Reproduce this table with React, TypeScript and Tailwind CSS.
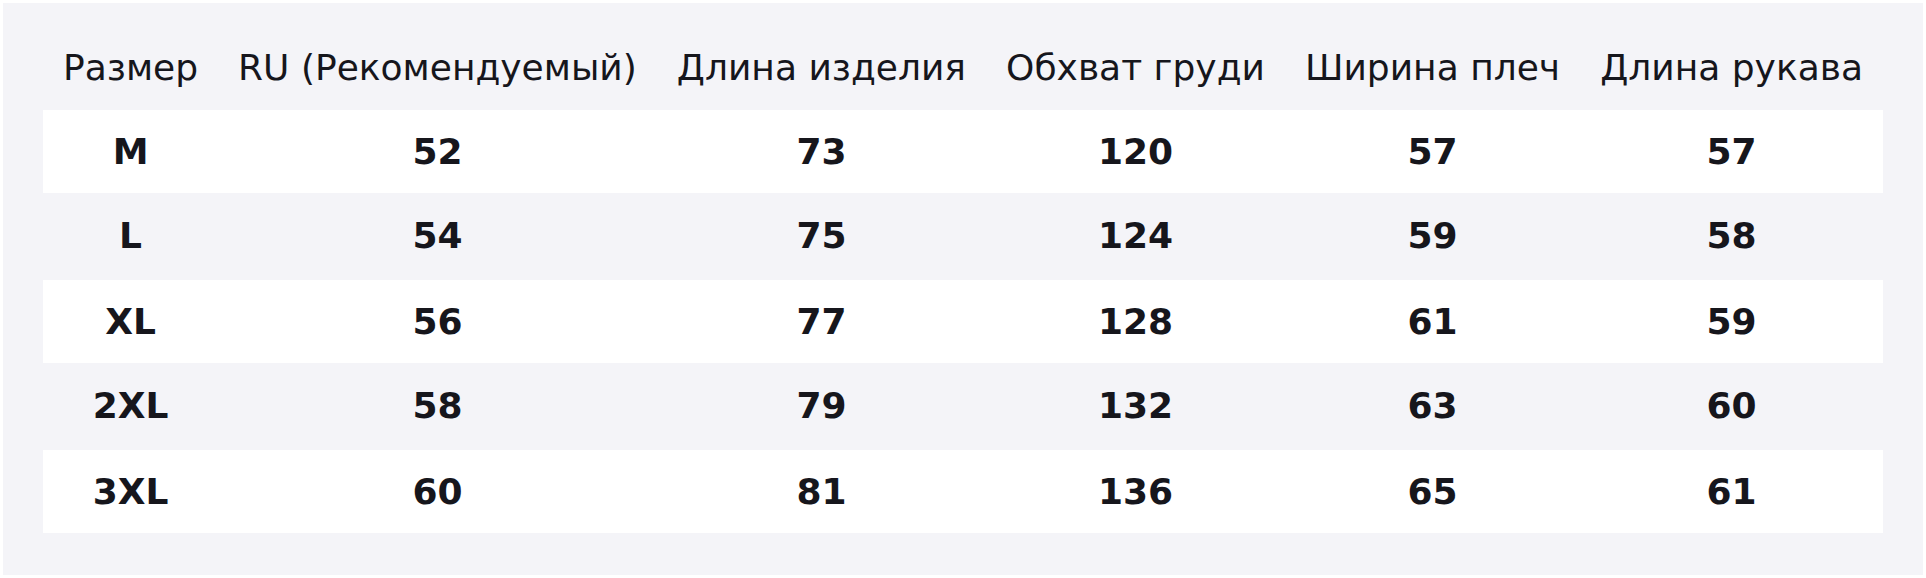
import React from "react";

const headers = [
  "Размер",
  "RU (Рекомендуемый)",
  "Длина изделия",
  "Обхват груди",
  "Ширина плеч",
  "Длина рукава",
];

const rows: string[][] = [
  ["M", "52", "73", "120", "57", "57"],
  ["L", "54", "75", "124", "59", "58"],
  ["XL", "56", "77", "128", "61", "59"],
  ["2XL", "58", "79", "132", "63", "60"],
  ["3XL", "60", "81", "136", "65", "61"],
];

export default function App() {
  return (
    <div
      className="w-[1926px] h-[578px] bg-white p-[3px]"
      style={{ fontFamily: '"DejaVu Sans", "Noto Sans", sans-serif' }}
    >
      <div className="h-[572px] bg-[#f4f4f8] px-[40px] pt-[40px]">
        <table className="w-full border-collapse text-[#16161c]">
          <thead>
            <tr>
              {headers.map((h) => (
                <th
                  key={h}
                  className="h-[65px] px-5 pt-[6px] align-top whitespace-nowrap text-center text-[36px] font-normal leading-[38px]"
                >
                  {h}
                </th>
              ))}
            </tr>
          </thead>
          <tbody>
            {rows.map((r, i) => {
              const white = i % 2 === 0;
              return (
                <tr key={r[0]}>
                  {r.map((c, j) => (
                    <td key={j} className="p-0 h-[85px] align-top">
                      {white ? (
                        <div className="mt-[2px] h-[83px] bg-white flex items-center justify-center text-[36px] font-bold leading-none">
                          {c}
                        </div>
                      ) : (
                        <div className="h-[85px] flex items-center justify-center text-[36px] font-bold leading-none">
                          {c}
                        </div>
                      )}
                    </td>
                  ))}
                </tr>
              );
            })}
          </tbody>
        </table>
      </div>
    </div>
  );
}
